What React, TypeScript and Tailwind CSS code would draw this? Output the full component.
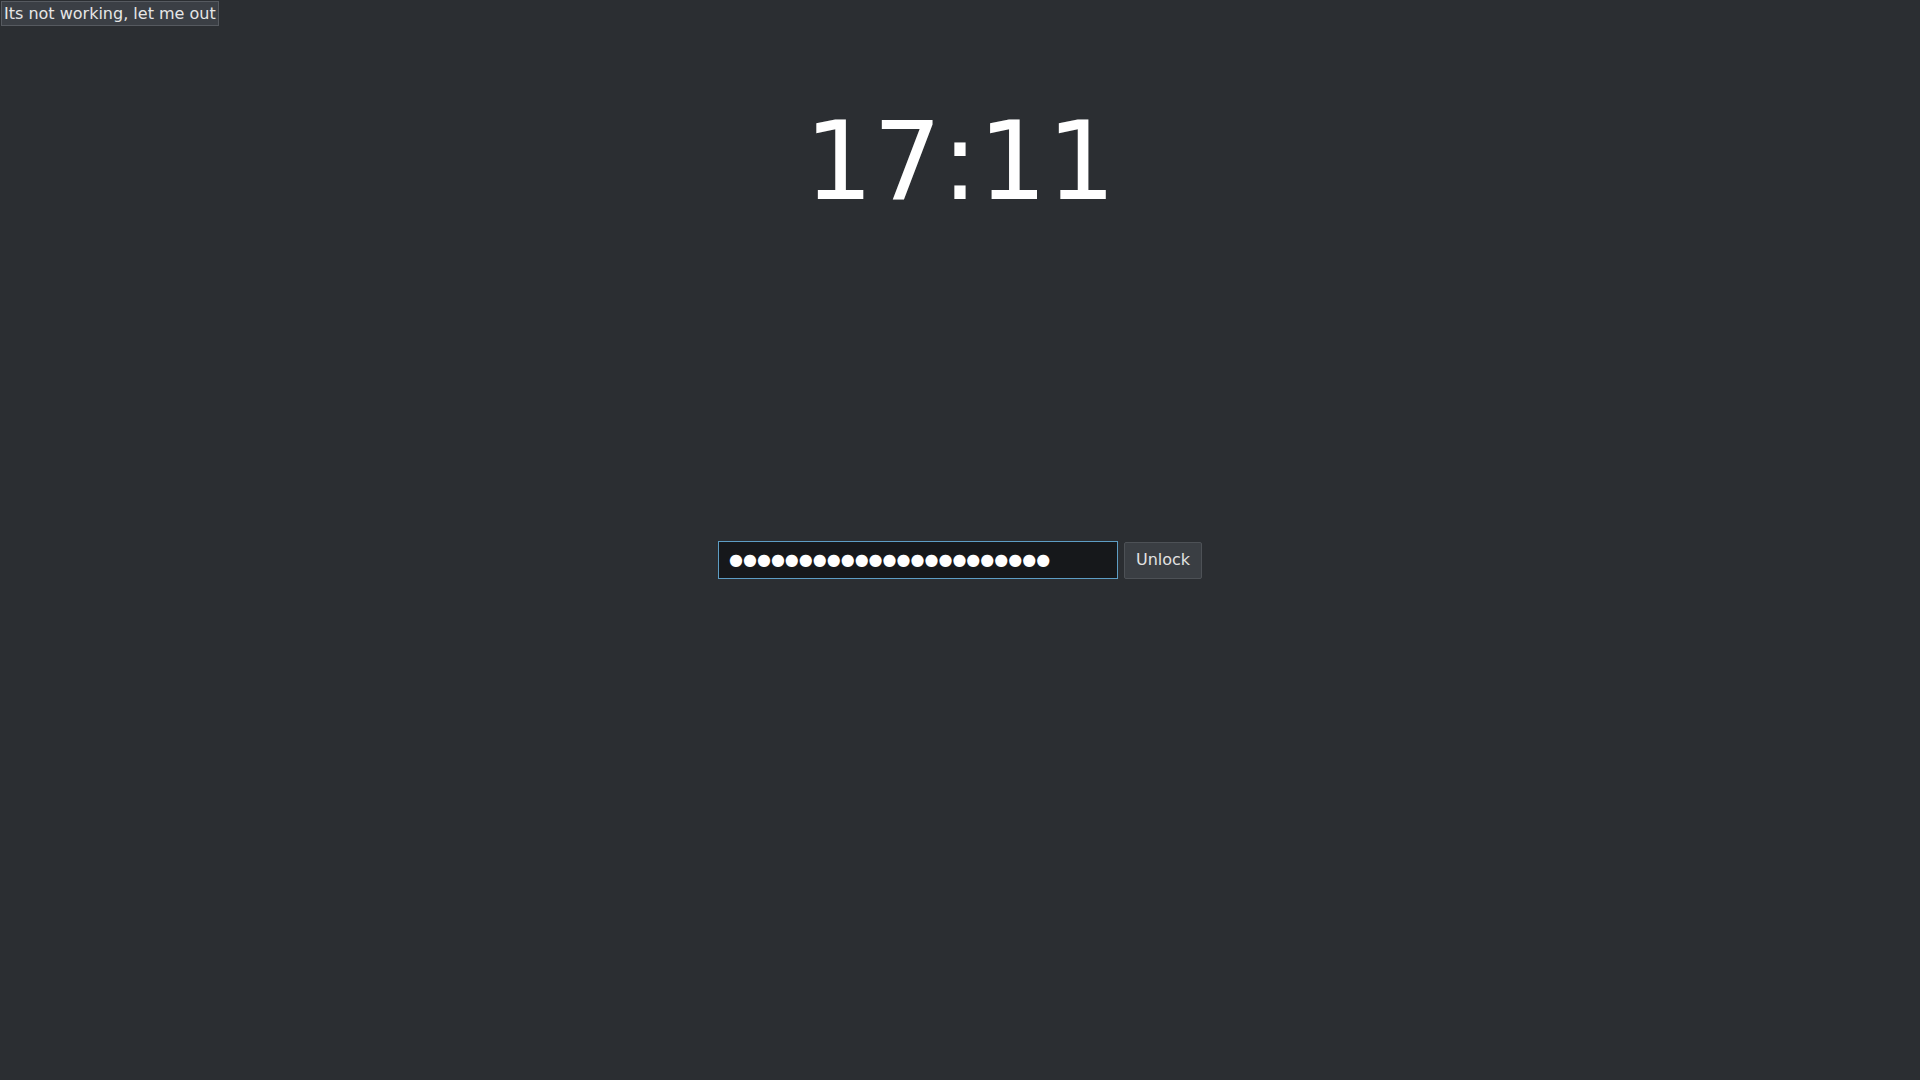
const dots = "●".repeat(23);

export default function App() {
  return (
    <div className="min-h-screen w-full bg-[#2b2e32] font-['DejaVu_Sans',sans-serif] text-white">
      {/* escape hatch */}
      <div className="p-px">
        <button className="h-[25px] border border-[#565a60] bg-[#3b3f45] px-[2px] text-[16px] leading-none text-[#e6e6e6]">
          Its not working, let me out
        </button>
      </div>

      <div className="flex flex-col items-center">
        {/* clock */}
        <div className="mt-[81px] text-[108px] leading-none text-white">17:11</div>

        {/* password row */}
        <div className="mt-[325px] flex items-center gap-[6px]">
          <div className="flex h-[38px] w-[400px] items-center border border-[#5d9dc4] bg-[#16181b] pl-[10px] text-[16px] leading-none text-white">
            {dots}
          </div>
          <button className="h-[37px] w-[78px] rounded-[2px] border border-[#4d5156] bg-[#3a3e43] text-[16px] text-[#e2e2e2]">
            Unlock
          </button>
        </div>
      </div>
    </div>
  );
}
